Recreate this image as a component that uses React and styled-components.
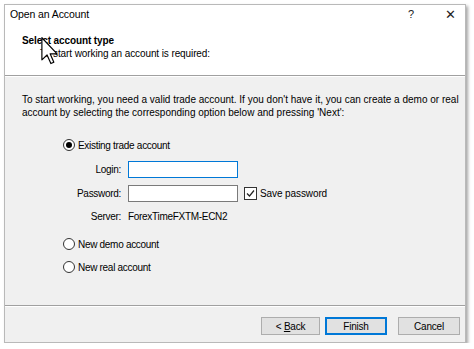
import React from 'react';
import styled, { createGlobalStyle } from 'styled-components';

const GlobalStyle = createGlobalStyle`
  html, body {
    margin: 0;
    padding: 0;
    background: #ffffff;
  }
  body {
    font-family: "Liberation Sans", Arial, sans-serif;
    font-size: 10px;
    color: #000;
  }
`;

const Page = styled.div`
  padding: 4px 0 0 4px;
`;

const Window = styled.div`
  position: relative;
  width: 460px;
  height: 337px;
  border: 1px solid #b9b9b9;
  background: #f0f0f0;
  box-shadow: 2px 2px 3px rgba(0, 0, 0, 0.35);
  display: flex;
  flex-direction: column;
`;

const TitleBar = styled.div`
  height: 18px;
  background: #fff;
  display: flex;
  align-items: center;
  padding-left: 5px;
  font-size: 10.5px;
  letter-spacing: -0.1px;
`;

const TitleText = styled.div`
  flex: 1;
`;

const TitleButton = styled.div`
  width: ${({ w }) => w}px;
  text-align: center;
  font-size: ${({ big }) => (big ? '13px' : '11px')};
  font-weight: 300;
  color: #222;
`;

const Header = styled.div`
  background: #fff;
  padding: 11px 0 15px 17px;
  border-bottom: 1px solid #a0a0a0;
  box-shadow: 0 1px 0 #fff;
  line-height: 13px;
`;

const HeaderTitle = styled.div`
  font-weight: bold;
  letter-spacing: -0.1px;
`;

const HeaderSub = styled.div`
  padding-left: 18px;
  letter-spacing: -0.1px;
`;

const Body = styled.div`
  flex: 1;
  padding: 17px 0 0 17px;
  display: flex;
  flex-direction: column;
`;

const Paragraph = styled.p`
  margin: 0;
  line-height: 13px;
`;

const RadioRow = styled.label`
  display: flex;
  align-items: center;
  height: 16px;
  margin-left: 41px;
  margin-top: ${({ top }) => top}px;
  gap: 3px;
  letter-spacing: -0.3px;
`;

const RadioDot = styled.span`
  width: 10px;
  height: 10px;
  border: 1px solid #333;
  border-radius: 50%;
  background: #fff;
  display: flex;
  align-items: center;
  justify-content: center;
  &::after {
    content: '';
    width: 6px;
    height: 6px;
    border-radius: 50%;
    background: ${({ checked }) => (checked ? '#000' : 'transparent')};
  }
`;

const Form = styled.div`
  display: grid;
  grid-template-columns: 99px 110px auto;
  column-gap: 7px;
  row-gap: 7px;
  margin-top: 8px;
  align-items: center;
  letter-spacing: -0.3px;
`;

const Label = styled.div`
  text-align: right;
`;

const Input = styled.div`
  height: 15px;
  border: 1px solid ${({ focused }) => (focused ? '#0078d7' : '#7a7a7a')};
  background: #fff;
`;

const CheckRow = styled.div`
  display: flex;
  align-items: center;
  gap: 3px;
  margin-left: -1px;
  letter-spacing: -0.1px;
`;

const CheckBox = styled.span`
  width: 11px;
  height: 11px;
  border: 1px solid #333;
  background: #fff;
  display: flex;
  align-items: center;
  justify-content: center;
`;

const ServerValue = styled.div`
  grid-column: 2 / 4;
  padding-top: 2px;
`;

const ServerLabel = styled(Label)`
  padding-top: 2px;
`;

const Footer = styled.div`
  height: 37px;
  border-top: 1px solid #a0a0a0;
  box-shadow: inset 0 1px 0 #fff;
  display: flex;
  justify-content: flex-end;
  padding: 11px 5px 0 0;
  box-sizing: border-box;
`;

const Button = styled.button`
  width: ${({ w }) => w}px;
  height: 18px;
  margin-left: ${({ gap }) => gap}px;
  padding: 0;
  background: #e1e1e1;
  border: 1px solid ${({ primary }) => (primary ? '#0078d7' : '#adadad')};
  box-shadow: ${({ primary }) => (primary ? 'inset 0 0 0 1px #0078d7' : 'none')};
  font-family: "Liberation Sans", Arial, sans-serif;
  font-size: 10px;
  letter-spacing: -0.2px;
  color: #000;
  u {
    text-decoration: underline;
  }
`;

const Cursor = styled.svg`
  position: absolute;
  left: 36px;
  top: 32px;
`;

const CheckMark = () => (
  <svg width="9" height="9" viewBox="0 0 9 9">
    <path d="M1 4.5 L3.5 7 L8 1.5" fill="none" stroke="#222" strokeWidth="1.2" />
  </svg>
);

export default function App() {
  return (
    <>
      <GlobalStyle />
      <Page>
        <Window>
          <TitleBar>
            <TitleText>Open an Account</TitleText>
            <TitleButton w={48}>?</TitleButton>
            <TitleButton w={30} big>✕</TitleButton>
          </TitleBar>
          <Header>
            <HeaderTitle>Select account type</HeaderTitle>
            <HeaderSub>To start working an account is required:</HeaderSub>
          </Header>
          <Body>
            <Paragraph>
              To start working, you need a valid trade account. If you don't have it, you can create a demo or real
              <br />
              account by selecting the corresponding option below and pressing 'Next':
            </Paragraph>
            <RadioRow top={18}>
              <RadioDot checked />
              Existing trade account
            </RadioRow>
            <Form>
              <Label>Login:</Label>
              <Input focused />
              <span />
              <Label>Password:</Label>
              <Input />
              <CheckRow>
                <CheckBox>
                  <CheckMark />
                </CheckBox>
                Save password
              </CheckRow>
              <ServerLabel>Server:</ServerLabel>
              <ServerValue>ForexTimeFXTM-ECN2</ServerValue>
            </Form>
            <RadioRow top={14}>
              <RadioDot />
              New demo account
            </RadioRow>
            <RadioRow top={7}>
              <RadioDot />
              New real account
            </RadioRow>
          </Body>
          <Footer>
            <Button w={59}>
              &lt; <u>B</u>ack
            </Button>
            <Button w={62} gap={5} primary>
              Finish
            </Button>
            <Button w={62} gap={11}>
              Cancel
            </Button>
          </Footer>
          <Cursor width="18" height="28" viewBox="0 0 12 19">
            <path
              d="M0.5 0.5 L0.5 15.5 L4 12.2 L6.6 18 L8.6 17.1 L6.1 11.4 L10.8 11.4 Z"
              fill="#fff"
              stroke="#000"
              strokeWidth="0.8"
              strokeLinejoin="round"
            />
          </Cursor>
        </Window>
      </Page>
    </>
  );
}
